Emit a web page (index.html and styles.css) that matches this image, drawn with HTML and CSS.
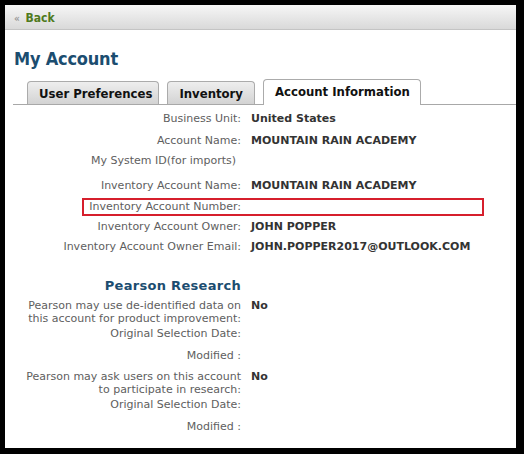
FILE: index.html
```html
<!DOCTYPE html>
<html lang="en">
<head>
  <meta charset="UTF-8">
  <meta name="viewport" content="width=device-width, initial-scale=1.0">
  <title>My Account</title>
  <link rel="stylesheet" href="styles.css">
</head>
<body>

  <div class="panel">
    <div class="topbar">
      <a class="back" href="#"><span class="arrow">&laquo;</span> Back</a>
    </div>

    <h1 class="title">My Account</h1>

    <div class="tabs">
      <div class="tab">User Preferences</div>
      <div class="tab">Inventory</div>
      <div class="tab active">Account Information</div>
    </div>

    <div class="details">
      <div class="row first"><span class="label">Business Unit:</span><span class="value">United States</span></div>
      <div class="row r2"><span class="label">Account Name:</span><span class="value">MOUNTAIN RAIN ACADEMY</span></div>
      <div class="row"><span class="label plain">My System ID(for imports)</span><span class="value"></span></div>
      <div class="row r4"><span class="label">Inventory Account Name:</span><span class="value">MOUNTAIN RAIN ACADEMY</span></div>
      <div class="row r5 marked"><span class="label">Inventory Account Number:</span><span class="value"></span></div>
      <div class="row"><span class="label">Inventory Account Owner:</span><span class="value">JOHN POPPER</span></div>
      <div class="row"><span class="label">Inventory Account Owner Email:</span><span class="value">JOHN.POPPER2017@OUTLOOK.COM</span></div>

      <div class="row section"><span class="label heading">Pearson Research</span><span class="value"></span></div>

      <div class="row small q first-q"><span class="label">Pearson may use de-identified data on<br>this account for product improvement:</span><span class="value">No</span></div>
      <div class="row small date"><span class="label">Original Selection Date:</span><span class="value"></span></div>
      <div class="row small mod"><span class="label">Modified :</span><span class="value"></span></div>

      <div class="row small q"><span class="label">Pearson may ask users on this account<br>to participate in research:</span><span class="value">No</span></div>
      <div class="row small date"><span class="label">Original Selection Date:</span><span class="value"></span></div>
      <div class="row small mod"><span class="label">Modified :</span><span class="value"></span></div>
    </div>
  </div>

</body>
</html>
```

FILE: styles.css
```css
body {
  margin: 0;
  padding: 5px 8px 6px 5px;
  background-color: #000000;
  font-family: "DejaVu Sans Condensed", "DejaVu Sans", Verdana, sans-serif;
}

.panel {
  background-color: #ffffff;
  height: 443px;
  overflow: hidden;
}

.topbar {
  height: 24px;
  background: linear-gradient(#f6f6f6, #d9d9d9);
  border-bottom: 1px solid #c4c4c4;
  padding-left: 9px;
  line-height: 24px;
}

.back {
  color: #4f7a1e;
  font-weight: bold;
  font-size: 12px;
  text-decoration: none;
}

.arrow {
  color: #9a9a9a;
  font-size: 10px;
  margin-right: 2px;
}

.title {
  margin: 18px 0 0 9px;
  font-size: 18px;
  line-height: 22px;
  color: #1b4d70;
  letter-spacing: -0.2px;
}

.tabs {
  display: flex;
  align-items: flex-end;
  gap: 8px;
  margin: 9px 0 0 8px;
  padding-left: 14px;
  border-bottom: 1px solid #a8a8a8;
  height: 25px;
}

.tab {
  height: 22px;
  line-height: 23px;
  padding: 0 11px;
  border: 1px solid #ababab;
  border-bottom: none;
  border-radius: 4px 4px 0 0;
  background: linear-gradient(#eeeeee, #d3d3d3);
  font-size: 13px;
  font-weight: bold;
  color: #111111;
}

.tab:first-child {
  padding: 0 6px 0 11px;
}

.tab.active {
  height: 24px;
  line-height: 23px;
  background: #ffffff;
  margin-bottom: -1px;
  padding: 0 10px 1px 11px;
}

.details {
  font-family: "DejaVu Sans", Verdana, sans-serif;
  font-size: 11px;
}

.row {
  display: grid;
  grid-template-columns: 236px 1fr;
  column-gap: 10px;
  line-height: 20px;
  position: relative;
}

.row.first {
  margin-top: 4px;
}

.row.r2 {
  margin-top: 2px;
}

.row.r4 {
  margin-top: 5px;
}

.row.r5 {
  margin-top: 1px;
}

.label {
  text-align: right;
  color: #5e5e5e;
}

.label.plain {
  padding-right: 5px;
}

.value {
  font-weight: bold;
  color: #333333;
}

/* highlight box drawn around a row */
.marked::after {
  content: "";
  position: absolute;
  left: 77px;
  right: 32px;
  top: 1px;
  bottom: 1px;
  border: 2px solid #d61f2c;
}

.row.section {
  margin-top: 19px;
}

.label.heading {
  font-weight: bold;
  font-size: 13px;
  letter-spacing: 0.3px;
  color: #1b4d70;
}

.row.small {
  line-height: 13px;
}

.row.q {
  margin-top: 8px;
}

.row.q.first-q {
  margin-top: 3px;
}

.row.date {
  margin-top: 2px;
}

.row.mod {
  margin-top: 9px;
}
```
